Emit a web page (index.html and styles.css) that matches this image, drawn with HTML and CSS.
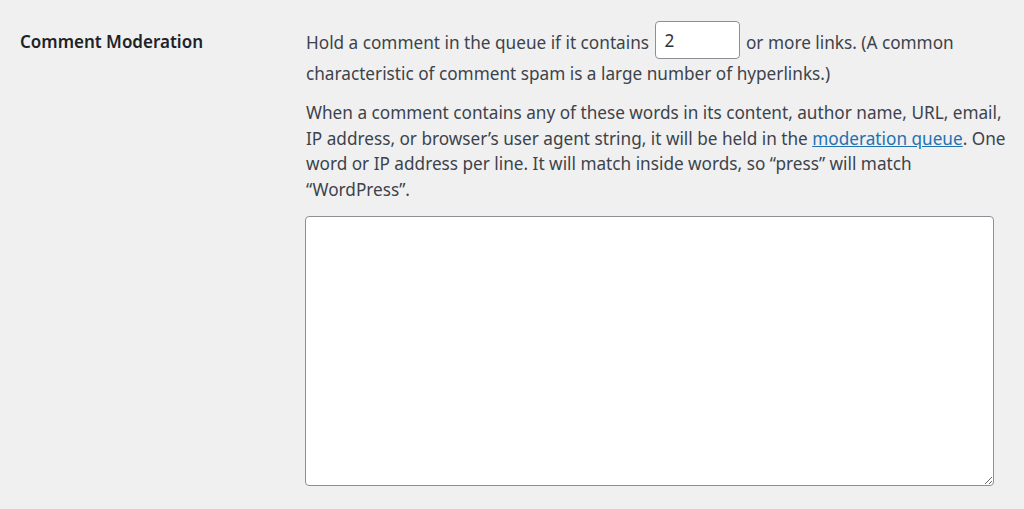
FILE: index.html
```html
<!DOCTYPE html>
<html lang="en">
<head>
<meta charset="utf-8">
<title>Discussion Settings</title>
<link rel="stylesheet" href="styles.css">
</head>
<body>
<div class="form-row">
  <div class="label">Comment Moderation</div>
  <div class="field">
    <p class="links-line">Hold a comment in the queue if it contains <input class="small-text" type="text" value="2"> or more links. (A common characteristic of comment spam is a large number of hyperlinks.)</p>
    <p class="desc">When a comment contains any of these words in its content, author name, URL, email, IP address, or browser’s user agent string, it will be held in the <a href="#">moderation queue</a>. One word or IP address per line. It will match inside words, so “press” will match “WordPress”.</p>
    <textarea class="keys"></textarea>
  </div>
</div>
</body>
</html>
```
FILE: styles.css
```css
html, body {
  margin: 0;
  padding: 0;
  background: #f0f0f1;
}
body {
  font-family: "Noto Sans", "Open Sans", sans-serif;
  font-size: 17.2px;
  color: #3c434a;
}
.form-row {
  display: grid;
  grid-template-columns: 286px 700px;
  padding: 21px 0 0 20px;
}
.label {
  font-weight: 600;
  color: #1d2327;
  font-size: 17px;
  padding-top: 9px;
}
.field p {
  margin: 0;
}
.links-line {
  line-height: 30px;
}
.small-text {
  box-sizing: border-box;
  width: 85px;
  height: 38px;
  margin: 0 1px 0 2px;
  padding: 0 8px;
  border: 1px solid #8c8f94;
  border-radius: 4px;
  background: #fff;
  font: inherit;
  color: #2c3338;
  vertical-align: 2px;
}
.field .desc {
  margin-top: 11px;
  line-height: 25.5px;
}
.desc a {
  color: #2271b1;
  text-decoration: underline;
}
.keys {
  display: block;
  box-sizing: border-box;
  width: 689px;
  height: 270px;
  margin-top: 14px;
  margin-left: -1px;
  border: 1px solid #8c8f94;
  border-radius: 4px;
  background: #fff;
}
```
